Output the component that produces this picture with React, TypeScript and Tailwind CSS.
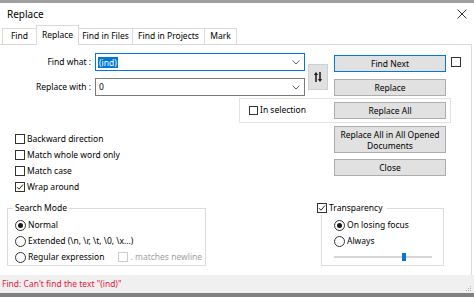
import React from 'react';

function Check({ checked = false, disabled = false, small = false }: { checked?: boolean; disabled?: boolean; small?: boolean }) {
  return (
    <span
      className={`inline-flex shrink-0 items-center justify-center bg-white border ${small ? 'w-[9px] h-[9px]' : 'w-[10px] h-[10px]'} ${disabled ? 'border-[#cccccc]' : 'border-[#333333]'}`}
    >
      {checked && (
        <svg width="8" height="8" viewBox="0 0 8 8">
          <path d="M1 4.2 L3 6.2 L7 1.5" fill="none" stroke="#222" strokeWidth="1" />
        </svg>
      )}
    </span>
  );
}

function Radio({ on = false }: { on?: boolean }) {
  return (
    <span className="inline-flex shrink-0 w-[11px] h-[11px] rounded-full border border-[#333333] bg-white items-center justify-center">
      {on && <span className="w-[5px] h-[5px] rounded-full bg-[#1a1a1a]" />}
    </span>
  );
}

function Btn({ children, focus = false, tall = false }: { children: React.ReactNode; focus?: boolean; tall?: boolean }) {
  return (
    <div
      className={`w-[112px] ${tall ? 'h-[27px]' : 'h-[17px]'} bg-[#e1e1e1] border ${focus ? 'border-[#0078d7]' : 'border-[#adadad]'} flex items-center justify-center text-center leading-[11px]`}
    >
      {children}
    </div>
  );
}

function Chevron() {
  return (
    <svg width="8" height="5" viewBox="0 0 8 5">
      <path d="M0.5 0.5 L4 4 L7.5 0.5" fill="none" stroke="#606060" strokeWidth="1" />
    </svg>
  );
}

export default function App() {
  const tabs = ['Find', 'Replace', 'Find in Files', 'Find in Projects', 'Mark'];
  const tabW = ['w-[34px]', 'w-[43px]', 'w-[54px]', 'w-[72px]', 'w-[32px]'];
  const options = [
    { label: 'Backward direction', checked: false },
    { label: 'Match whole word only', checked: false },
    { label: 'Match case', checked: false },
    { label: 'Wrap around', checked: true },
  ];

  return (
    <div className="w-[474px] h-[297px] bg-white border-t-[3px] border-b-[4px] border-t-[#a0a0a0] border-b-[#808080] flex flex-col text-[8.5px] text-black font-['Noto_Sans',sans-serif] overflow-hidden">
      {/* title bar */}
      <div className="h-[22px] shrink-0 flex items-center justify-between pl-[7px] pr-[7px]">
        <span className="text-[10px]">Replace</span>
        <svg width="10" height="10" viewBox="0 0 10 10">
          <path d="M0.5 0.5 L9.5 9.5 M9.5 0.5 L0.5 9.5" stroke="#333" strokeWidth="1" />
        </svg>
      </div>

      {/* tabs */}
      <div className="h-[19px] shrink-0 flex items-end pl-[2px] relative z-10">
        {tabs.map((t, i) => (
          <div
            key={t}
            className={`${tabW[i]} flex items-center justify-center border border-[#d9d9d9] bg-white ${i === 1 ? 'h-[20px] border-b-0 -mb-px pb-[1px]' : 'h-[16px] border-b-0'} ${i > 1 ? 'border-l-0' : ''} ${i === 0 ? 'border-r-0' : ''}`}
          >
            {t}
          </div>
        ))}
      </div>

      {/* panel */}
      <div className="h-[231px] shrink-0 border-t border-r border-[#d9d9d9] mr-[2px] flex flex-col">
        {/* find / replace inputs */}
        <div className="flex pt-[8px]">
          <div className="flex flex-col gap-[7px]">
            <div className="flex items-center">
              <span className="w-[95px] pr-[4px] text-right">Find what :</span>
              <div className="w-[210px] h-[18px] border border-[#0078d7] flex items-center justify-between pl-[2px] pr-[4px]">
                <span className="bg-[#0078d7] text-white px-[1px] leading-[11px]">(ind)</span>
                <Chevron />
              </div>
            </div>
            <div className="flex items-center">
              <span className="w-[95px] pr-[4px] text-right">Replace with :</span>
              <div className="w-[210px] h-[18px] border border-[#7a7a7a] flex items-center justify-between pl-[3px] pr-[4px]">
                <span>0</span>
                <Chevron />
              </div>
            </div>
          </div>
          <div className="ml-[3px] mt-[11px] w-[20px] h-[26px] bg-[#e1e1e1] border border-[#cfcfcf] flex items-center justify-center">
            <svg width="10" height="12" viewBox="0 0 10 12">
              <path d="M3 11 V2" stroke="#222" strokeWidth="1.6" />
              <path d="M0.8 4 L3 1 L5.2 4 Z" fill="#222" />
              <path d="M7 1 V10" stroke="#222" strokeWidth="1.6" />
              <path d="M4.8 8 L7 11 L9.2 8 Z" fill="#222" />
            </svg>
          </div>
          <div className="ml-[6px] mt-[2px] flex flex-col gap-[7px]">
            <Btn focus>Find Next</Btn>
            <Btn>Replace</Btn>
          </div>
          <div className="ml-[5px] mt-[4px]">
            <Check />
          </div>
        </div>

        {/* in selection group */}
        <div className="mt-[2px] ml-[239px] w-[212px] h-[25px] border border-[#e3e3e3] flex items-center">
          <div className="w-[94px] pl-[9px] flex items-center gap-[2px]">
            <Check small />
            <span>In selection</span>
          </div>
          <Btn>Replace All</Btn>
        </div>

        {/* options + more buttons */}
        <div className="flex">
          <div className="w-[334px] pl-[15px] pt-[8px] flex flex-col">
            {options.map((o) => (
              <div key={o.label} className="h-[16px] flex items-center gap-[2px]">
                <Check checked={o.checked} />
                <span>{o.label}</span>
              </div>
            ))}
          </div>
          <div className="pt-[3px] flex flex-col gap-[6px]">
            <Btn tall>
              Replace All in All Opened
              <br />
              Documents
            </Btn>
            <Btn>Close</Btn>
          </div>
        </div>

        {/* group boxes */}
        <div className="mt-[13px] flex">
          <div className="ml-[7px] w-[199px] h-[58px] border border-[#dcdcdc] relative pt-[8px] pl-[7px]">
            <span className="absolute left-[5px] -top-[7px] bg-white px-[2px]">Search Mode</span>
            <div className="h-[16px] flex items-center gap-[2px]">
              <Radio on />
              <span>Normal</span>
            </div>
            <div className="h-[16px] flex items-center gap-[2px]">
              <Radio />
              <span>Extended (\n, \r, \t, \0, \x...)</span>
            </div>
            <div className="h-[16px] flex items-center gap-[2px]">
              <Radio />
              <span>Regular expression</span>
              <span className="ml-[12px] flex items-center gap-[2px] text-[#a0a0a0]">
                <Check disabled />
                <span>. matches newline</span>
              </span>
            </div>
          </div>
          <div className="ml-[115px] w-[123px] h-[58px] border border-[#dcdcdc] relative pt-[8px] pl-[12px]">
            <span className="absolute -left-[5px] -top-[7px] bg-white pr-[4px] flex items-center gap-[2px]">
              <Check checked />
              <span>Transparency</span>
            </span>
            <div className="h-[16px] flex items-center gap-[2px]">
              <Radio on />
              <span>On losing focus</span>
            </div>
            <div className="h-[16px] flex items-center gap-[2px]">
              <Radio />
              <span>Always</span>
            </div>
            <div className="h-[16px] w-[98px] flex items-center relative">
              <div className="w-full h-[2px] bg-[#d6d6d6]" />
              <span className="absolute left-[68px] top-[4px] w-[4px] h-[8px] bg-[#0078d7]" />
            </div>
          </div>
        </div>
      </div>

      {/* status bar */}
      <div className="h-[18px] shrink-0 bg-[#f0f0f0] flex items-center justify-between pl-[2px] pr-[2px] text-[#e5173f]">
        <span>Find: Can't find the text "(ind)"</span>
        <svg width="7" height="7" viewBox="0 0 7 7" className="self-end mb-[1px]">
          <rect x="5" y="1" width="1" height="1" fill="#b0b0b0" />
          <rect x="3" y="3" width="1" height="1" fill="#b0b0b0" />
          <rect x="5" y="3" width="1" height="1" fill="#b0b0b0" />
          <rect x="1" y="5" width="1" height="1" fill="#b0b0b0" />
          <rect x="3" y="5" width="1" height="1" fill="#b0b0b0" />
          <rect x="5" y="5" width="1" height="1" fill="#b0b0b0" />
        </svg>
      </div>
    </div>
  );
}
